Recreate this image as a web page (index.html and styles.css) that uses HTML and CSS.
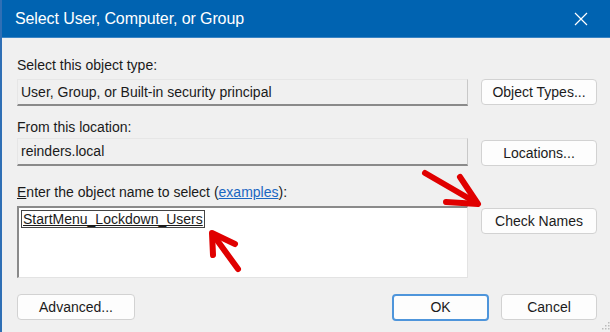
FILE: index.html
```html
<!DOCTYPE html>
<html>
<head>
<meta charset="utf-8">
<link rel="stylesheet" href="styles.css">
</head>
<body>
<div class="window">
  <div class="titlebar">
    <span class="title">Select User, Computer, or Group</span>
    <svg class="close" width="14" height="14" viewBox="0 0 14 14"><path d="M1 1 L13 13 M13 1 L1 13" stroke="#fff" stroke-width="1.2" fill="none"/></svg>
  </div>
  <div class="content">
    <div class="label l1">Select this object type:</div>
    <div class="row r1">
      <div class="rbox">User, Group, or Built-in security principal</div>
      <div class="btn">Object Types...</div>
    </div>
    <div class="label l2">From this location:</div>
    <div class="row r2">
      <div class="rbox tall">reinders.local</div>
      <div class="btn">Locations...</div>
    </div>
    <div class="label l3"><u>E</u>nter the object name to select (<a class="link">examples</a>):</div>
    <div class="row r3">
      <div class="tarea"><span class="sel">StartMenu_Lockdown_Users</span></div>
      <div class="btn">Check Names</div>
    </div>
    <div class="bottom">
      <div class="btn adv">Advanced...</div>
      <div class="spacer"></div>
      <div class="btn ok">OK</div>
      <div class="btn cancel">Cancel</div>
    </div>
  </div>
  <svg class="grip" width="10" height="10" viewBox="0 0 10 10">
    <rect x="8" y="0" width="1.5" height="1.5" fill="#bbb"/>
    <rect x="5" y="3" width="1.5" height="1.5" fill="#bbb"/><rect x="8" y="3" width="1.5" height="1.5" fill="#bbb"/>
    <rect x="2" y="6" width="1.5" height="1.5" fill="#bbb"/><rect x="5" y="6" width="1.5" height="1.5" fill="#bbb"/><rect x="8" y="6" width="1.5" height="1.5" fill="#bbb"/>
  </svg>
  <svg class="arrows" width="610" height="332" viewBox="0 0 610 332">
    <g stroke="#e00000" stroke-width="6" stroke-linecap="round" stroke-linejoin="round" fill="none">
      <path d="M425 173 L475 202"/>
      <path d="M460 177 L478 204 L446 202"/>
      <path d="M238 269 L214 236"/>
      <path d="M213 255 L212 233 L235 244"/>
    </g>
  </svg>
</div>
</body>
</html>
```
FILE: styles.css
```css
html, body { margin: 0; padding: 0; }
body { width: 610px; height: 332px; overflow: hidden; background: #f0f0f0; font-family: "Liberation Sans", Arial, sans-serif; }
.window { position: relative; width: 610px; height: 332px; box-sizing: border-box; border-left: 2px solid #2f6fb5; background: #f0f0f0; }
.titlebar { height: 38px; background: #0063b1; display: flex; align-items: center; padding-left: 13px; padding-right: 22px; box-sizing: border-box; border-bottom: 1px solid #3a84c4; }
.title { color: #fff; font-size: 16px; flex: 1; letter-spacing: -0.1px; }
.close { display: block; }
.content { padding: 0 13px 0 15px; color: #1a1a1a; font-size: 14px; }
.label { height: 16px; line-height: 16px; }
.l1 { margin-top: 19px; }
.l2 { margin-top: 13px; }
.l3 { margin-top: 18px; }
.row { display: grid; grid-template-columns: 451px 116px; column-gap: 13px; align-items: start; }
.r1 { margin-top: 6px; }
.r2 { margin-top: 3px; }
.r3 { margin-top: 6px; }
.rbox { height: 27px; box-sizing: border-box; border: 1px solid #e6e6e6; border-bottom: 2px solid #8a8a8a; border-right: 1px solid #c8c8c8; padding-left: 3px; line-height: 24px; background: #f0f0f0; white-space: nowrap; }
.rbox.tall { height: 28px; line-height: 25px; }
.btn { height: 26px; box-sizing: border-box; border: 1px solid #d2d2d2; border-radius: 4px; background: #fdfdfd; text-align: center; line-height: 24px; color: #1b1b1b; white-space: nowrap; }
.r2 .btn { margin-top: 2px; }
.r3 .btn { margin-top: 2px; }
.tarea { height: 72px; box-sizing: border-box; background: #fff; border-top: 2px solid #8a8a8a; border-left: 2px solid #8a8a8a; border-right: 1px solid #e3e3e3; border-bottom: 1px solid #e3e3e3; padding: 2px 0 0 2px; }
.sel { display: inline-block; border: 1px solid #444; padding: 0 1px; line-height: 16px; text-decoration: underline; }
.link { color: #1a67c2; text-decoration: underline; }
.bottom { display: flex; margin-top: 16px; height: 27px; }
.adv { width: 118px; }
.spacer { flex: 1; }
.ok { width: 97px; border: 2px solid #4e95db; line-height: 22px; height: 27px; }
.cancel { width: 96px; margin-left: 12px; }
.grip { position: absolute; right: 0; bottom: 0; }
.arrows { position: absolute; left: -2px; top: 0; pointer-events: none; }
```
